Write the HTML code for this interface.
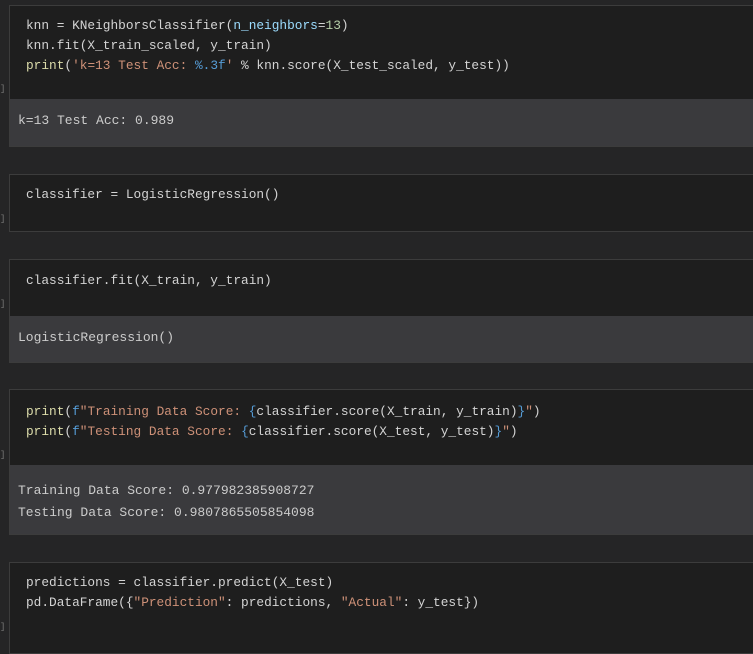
<!DOCTYPE html>
<html><head><style>
body{margin:0;width:753px;height:636px;background:#252526;position:relative;overflow:hidden;font-family:"Liberation Mono",monospace}
.cell{position:absolute;left:9px;right:-2px;background:#1e1e1e;border:1px solid #3c3c3c}
.code{position:absolute;left:16px;font-size:12.8px;line-height:20px;color:#d4d4d4;white-space:pre}
.out{position:absolute;left:0;right:0;background:#3a3a3d;color:#cccccc;font-size:13px;white-space:pre}
.out div{position:absolute;left:8px}
.br{position:absolute;left:0;color:#777;font-size:9px}
.s{color:#ce9178}.n{color:#b5cea8}.p{color:#9cdcfe}.f{color:#dcdcaa}.k{color:#569cd6}
</style></head><body>
<div class="cell" style="top:5px;height:140px">
 <div class="code" style="top:10px">knn = KNeighborsClassifier(<span class="p">n_neighbors</span>=<span class="n">13</span>)
knn.fit(X_train_scaled, y_train)
<span class="f">print</span>(<span class="s">'k=13 Test Acc: </span><span class="k">%.3f</span><span class="s">'</span> % knn.score(X_test_scaled, y_test))</div>
 <div class="out" style="top:93px;height:47px"><div style="top:14px">k=13 Test Acc: 0.989</div></div>
</div>
<div class="br" style="top:84px">]</div>
<div class="cell" style="top:174px;height:56px">
 <div class="code" style="top:10px">classifier = LogisticRegression()</div>
</div>
<div class="br" style="top:214px">]</div>
<div class="cell" style="top:259px;height:102px">
 <div class="code" style="top:11px">classifier.fit(X_train, y_train)</div>
 <div class="out" style="top:56px;height:46px"><div style="top:14px">LogisticRegression()</div></div>
</div>
<div class="br" style="top:299px">]</div>
<div class="cell" style="top:389px;height:144px">
 <div class="code" style="top:12px"><span class="f">print</span>(<span class="k">f</span><span class="s">"Training Data Score: </span><span class="k">{</span>classifier.score(X_train, y_train)<span class="k">}</span><span class="s">"</span>)
<span class="f">print</span>(<span class="k">f</span><span class="s">"Testing Data Score: </span><span class="k">{</span>classifier.score(X_test, y_test)<span class="k">}</span><span class="s">"</span>)</div>
 <div class="out" style="top:75px;height:69px"><div style="top:15px;line-height:22px">Training Data Score: 0.977982385908727
Testing Data Score: 0.9807865505854098</div></div>
</div>
<div class="br" style="top:450px">]</div>
<div class="cell" style="top:562px;height:90px">
 <div class="code" style="top:10px">predictions = classifier.predict(X_test)
pd.DataFrame({<span class="s">"Prediction"</span>: predictions, <span class="s">"Actual"</span>: y_test})</div>
</div>
<div class="br" style="top:622px">]</div>
</body></html>
